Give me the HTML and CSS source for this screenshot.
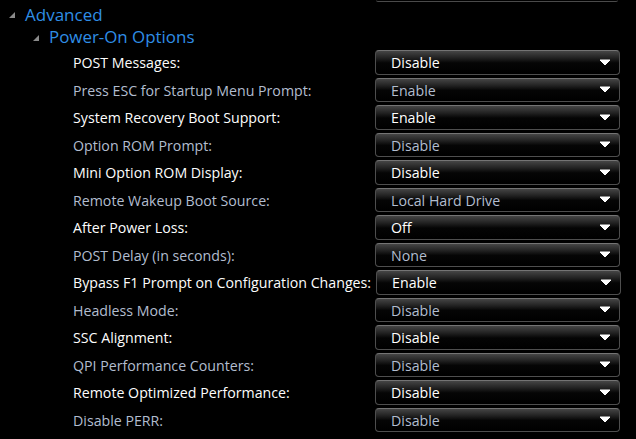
FILE: index.html
```html
<!DOCTYPE html>
<html>
<head>
<meta charset="utf-8">
<link rel="stylesheet" href="styles.css">
</head>
<body>
<div class="page">
  <div class="tail-row"><div class="tail"></div></div>
  <div class="node lvl1"><span class="expander"></span><span class="node-title">Advanced</span></div>
  <div class="node lvl2"><span class="expander"></span><span class="node-title">Power-On Options</span></div>
  <div class="rows">
    <div class="row"><span class="label">POST Messages:</span><div class="combo"><span class="value">Disable</span><svg class="arrow" width="12" height="7" viewBox="0 0 12 7"><polygon points="1,1 11,1 6,6"/></svg></div></div>
    <div class="row off"><span class="label">Press ESC for Startup Menu Prompt:</span><div class="combo"><span class="value">Enable</span><svg class="arrow" width="12" height="7" viewBox="0 0 12 7"><polygon points="1,1 11,1 6,6"/></svg></div></div>
    <div class="row"><span class="label">System Recovery Boot Support:</span><div class="combo"><span class="value">Enable</span><svg class="arrow" width="12" height="7" viewBox="0 0 12 7"><polygon points="1,1 11,1 6,6"/></svg></div></div>
    <div class="row off"><span class="label">Option ROM Prompt:</span><div class="combo"><span class="value">Disable</span><svg class="arrow" width="12" height="7" viewBox="0 0 12 7"><polygon points="1,1 11,1 6,6"/></svg></div></div>
    <div class="row"><span class="label">Mini Option ROM Display:</span><div class="combo"><span class="value">Disable</span><svg class="arrow" width="12" height="7" viewBox="0 0 12 7"><polygon points="1,1 11,1 6,6"/></svg></div></div>
    <div class="row off"><span class="label">Remote Wakeup Boot Source:</span><div class="combo"><span class="value">Local Hard Drive</span><svg class="arrow" width="12" height="7" viewBox="0 0 12 7"><polygon points="1,1 11,1 6,6"/></svg></div></div>
    <div class="row"><span class="label">After Power Loss:</span><div class="combo"><span class="value">Off</span><svg class="arrow" width="12" height="7" viewBox="0 0 12 7"><polygon points="1,1 11,1 6,6"/></svg></div></div>
    <div class="row off"><span class="label">POST Delay (in seconds):</span><div class="combo"><span class="value">None</span><svg class="arrow" width="12" height="7" viewBox="0 0 12 7"><polygon points="1,1 11,1 6,6"/></svg></div></div>
    <div class="row"><span class="label">Bypass F1 Prompt on Configuration Changes:</span><div class="combo"><span class="value">Enable</span><svg class="arrow" width="12" height="7" viewBox="0 0 12 7"><polygon points="1,1 11,1 6,6"/></svg></div></div>
    <div class="row off"><span class="label">Headless Mode:</span><div class="combo"><span class="value">Disable</span><svg class="arrow" width="12" height="7" viewBox="0 0 12 7"><polygon points="1,1 11,1 6,6"/></svg></div></div>
    <div class="row"><span class="label">SSC Alignment:</span><div class="combo"><span class="value">Disable</span><svg class="arrow" width="12" height="7" viewBox="0 0 12 7"><polygon points="1,1 11,1 6,6"/></svg></div></div>
    <div class="row off"><span class="label">QPI Performance Counters:</span><div class="combo"><span class="value">Disable</span><svg class="arrow" width="12" height="7" viewBox="0 0 12 7"><polygon points="1,1 11,1 6,6"/></svg></div></div>
    <div class="row"><span class="label">Remote Optimized Performance:</span><div class="combo"><span class="value">Disable</span><svg class="arrow" width="12" height="7" viewBox="0 0 12 7"><polygon points="1,1 11,1 6,6"/></svg></div></div>
    <div class="row off"><span class="label">Disable PERR:</span><div class="combo"><span class="value">Disable</span><svg class="arrow" width="12" height="7" viewBox="0 0 12 7"><polygon points="1,1 11,1 6,6"/></svg></div></div>
  </div>
</div>
</body>
</html>
```

FILE: styles.css
```css
html, body {
  margin: 0;
  padding: 0;
  background: #000;
  height: 100%;
  overflow: hidden;
}
.page {
  font-family: "Open Sans", "Noto Sans", "Liberation Sans", sans-serif;
  color: #fff;
  width: 636px;
  height: 439px;
  overflow: hidden;
}
.tail-row {
  height: 2px;
  padding-left: 376px;
}
.tail {
  width: 242px;
  height: 1px;
  border-bottom: 1px solid #4a4a4a;
  border-radius: 0 0 3px 3px;
}
.node {
  display: flex;
  align-items: center;
  color: #2f8ee6;
}
.lvl1 {
  height: 25px;
  padding-left: 9px;
  font-size: 17px;
}
.lvl2 {
  height: 21.5px;
  padding-left: 33px;
  font-size: 16.9px;
}
.expander {
  width: 0;
  height: 0;
  border-style: solid;
  border-width: 0 0 6px 6px;
  border-color: transparent transparent #8a8a8a transparent;
  margin-right: 10px;
  margin-top: 1px;
}
.node-title {
  line-height: 1;
}
.rows {
  padding-left: 73px;
}
.row {
  height: 27.5px;
  display: flex;
  align-items: center;
  font-size: 14.2px;
}
.label {
  min-width: 297px;
  color: #fdfdfd;
  white-space: nowrap;
  padding-top: 1px;
}
.row.off .label,
.row.off .value {
  color: #b2bdcf;
}
.combo {
  margin-left: 5px;
  width: 245px;
  height: 24.5px;
  box-sizing: border-box;
  border: 1px solid #4e4e4e;
  border-top-color: #747474;
  border-radius: 4px;
  background: linear-gradient(to bottom, #454545 0%, #222 30%, #050505 52%, #000 100%);
  display: flex;
  align-items: center;
  justify-content: space-between;
  padding: 1px 8px 0 15px;
}
.value {
  color: #fff;
  white-space: nowrap;
}
.arrow {
  fill: #fff;
  stroke: #fff;
  stroke-width: 1;
  stroke-linejoin: round;
  margin-top: -1px;
}
```
